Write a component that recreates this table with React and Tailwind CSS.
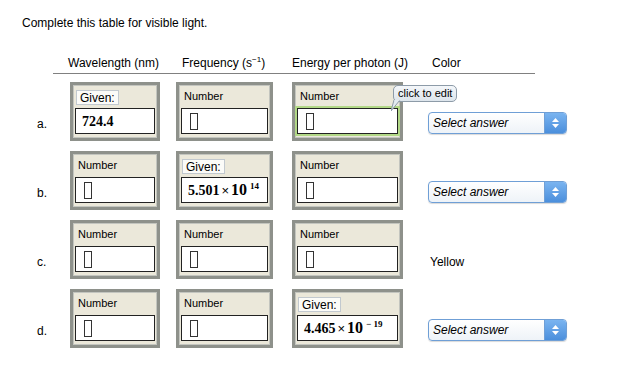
import React from "react";

// answer box with a "Number" or "Given:" caption on top
const Cell = ({ width, given, focus, children }) => (
  <div
    className={`${width} h-[59px] flex flex-col border-[3px] border-[#8e918b] bg-[#ebe8da] shadow-[inset_0_0_0_1px_#c3c5bf] px-[2px] pb-[4px]`}>
    <div className="h-[23px] shrink-0">
      {given ? (
        <span className="inline-block mt-[2px] ml-[1px] px-[3px] h-[15px] leading-[14px] text-[12px] bg-[#fbfbf8] border border-[#c2c9cf]">
          Given:
        </span>
      ) : (
        <div className="pl-[3px] pt-[5px] text-[11px] leading-[13px]">Number</div>
      )}
    </div>
    <div
      className={`flex-1 flex items-center bg-white border border-[#222] ${
        focus ? "shadow-[0_0_0_2px_#b2d887]" : ""
      }`}>
      {children ?? <span className="ml-[8px] w-[8px] h-[17px] border border-[#333]" />}
    </div>
  </div>
);

const Given = ({ base, exp }) => (
  <span className="ml-[6px] font-['Liberation_Serif',serif] font-bold text-[14px] whitespace-nowrap">
    {base}
    {exp && (
      <>
        <span className="font-['Liberation_Sans',sans-serif] font-normal text-[13px] mx-[2px]">×</span>
        <span className="text-[16px]">10</span>
        <sup className="text-[9px] ml-[3px] relative -top-[6px]">{exp}</sup>
      </>
    )}
  </span>
);

const Select = () => (
  <div className="mt-[30px] w-[139px] h-[22px] flex rounded-[4px] border border-[#6f9fd6] bg-gradient-to-b from-white to-[#eef3f8] shadow-[0_1px_1px_rgba(0,0,0,0.15)] overflow-hidden">
    <span className="flex-1 pl-[4px] italic text-[12px] leading-[20px]">Select answer</span>
    <span className="w-[22px] flex flex-col items-center justify-center gap-[2px] bg-gradient-to-b from-[#7ab4f0] to-[#4b8fdc] border-l border-[#6f9fd6]">
      <svg width="7" height="4" viewBox="0 0 7 4">
        <path d="M0 4 L3.5 0 L7 4 Z" fill="#fff" />
      </svg>
      <svg width="7" height="4" viewBox="0 0 7 4">
        <path d="M0 0 L3.5 4 L7 0 Z" fill="#fff" />
      </svg>
    </span>
  </div>
);

const Row = ({ label, c1, c2, c3, last }) => (
  <div className="flex h-[59px]">
    <div className="w-[70px] pl-[37px] pt-[35px] text-[12px] leading-[14px]">{label}</div>
    {c1}
    <div className="ml-[16px]">{c2}</div>
    <div className="ml-[19px] relative">{c3}</div>
    <div className="ml-[25px]">{last}</div>
  </div>
);

export default function App() {
  return (
    <div className="w-[617px] h-[382px] bg-white text-black font-['Liberation_Sans',Arial,sans-serif]">
      <p className="pl-[22px] pt-[16px] text-[12px] leading-[14px]">Complete this table for visible light.</p>

      <div className="ml-[53px] mt-[26px] w-[482px] flex pl-[15px] pb-[3px] border-b border-[#808080] text-[12px] leading-[14px]">
        <span className="w-[114px]">Wavelength (nm)</span>
        <span className="w-[110px]">
          Frequency (s<sup className="text-[8px] relative -top-[5px]">−1</sup>)
        </span>
        <span className="w-[140px]">Energy per photon (J)</span>
        <span>Color</span>
      </div>

      <div className="mt-[8px] flex flex-col gap-[10px]">
        <Row
          label="a."
          c1={
            <Cell width="w-[90px]" given>
              <Given base="724.4" />
            </Cell>
          }
          c2={<Cell width="w-[97px]" />}
          c3={
            <>
              <Cell width="w-[111px]" focus />
              {/* hover hint */}
              <div className="absolute left-[101px] top-[3px] z-10">
                <div className="px-[4px] h-[17px] leading-[15px] text-[11px] whitespace-nowrap rounded-[5px] border border-[#8d9ba8] bg-gradient-to-b from-[#f4f7fa] to-[#dde5ec]">
                  click to edit
                </div>
                <svg className="absolute left-[-2px] top-[15px]" width="10" height="12" viewBox="0 0 10 12">
                  <path d="M3 0 L0 11 L9 0" fill="#e2e9ef" stroke="#8d9ba8" strokeWidth="1" />
                  <path d="M3.5 0 L8.5 0" stroke="#e2e9ef" strokeWidth="2" />
                </svg>
              </div>
            </>
          }
          last={<Select />}
        />
        <Row
          label="b."
          c1={<Cell width="w-[90px]" />}
          c2={
            <Cell width="w-[97px]" given>
              <Given base="5.501" exp="14" />
            </Cell>
          }
          c3={<Cell width="w-[111px]" />}
          last={<Select />}
        />
        <Row
          label="c."
          c1={<Cell width="w-[90px]" />}
          c2={<Cell width="w-[97px]" />}
          c3={<Cell width="w-[111px]" />}
          last={<div className="pl-[2px] pt-[35px] text-[12px] leading-[14px]">Yellow</div>}
        />
        <Row
          label="d."
          c1={<Cell width="w-[90px]" />}
          c2={<Cell width="w-[97px]" />}
          c3={
            <Cell width="w-[111px]" given>
              <Given base="4.465" exp="− 19" />
            </Cell>
          }
          last={<Select />}
        />
      </div>
    </div>
  );
}
